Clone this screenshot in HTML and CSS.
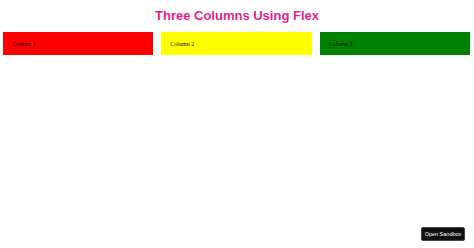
FILE: index.html
```html
<!DOCTYPE html>
<html lang="en">
<head>
<meta charset="utf-8">
<title>Three Columns Using Flex</title>
<link rel="stylesheet" href="styles.css">
</head>
<body>
<h1 class="title">Three Columns Using Flex</h1>
<div class="row">
  <div class="col col-red">Column 1</div>
  <div class="col col-yellow">Column 2</div>
  <div class="col col-green">Column 3</div>
</div>
<a class="sandbox-btn" href="#">Open Sandbox</a>
</body>
</html>
```

FILE: styles.css
```css
html, body {
  margin: 0;
  padding: 0;
  background: #ffffff;
}
body {
  width: 474px;
  height: 248px;
  position: relative;
  font-family: "Liberation Serif", "Times New Roman", serif;
}
.title {
  margin: 0;
  padding-top: 8px;
  height: 24px;
  font-family: "Liberation Sans", Arial, sans-serif;
  font-weight: bold;
  font-size: 13px;
  line-height: 16px;
  color: #e91e8c;
  text-align: center;
}
.row {
  display: flex;
  gap: 8px;
  padding: 0 4px 0 3px;
}
.col {
  flex: 1;
  height: 23px;
  box-sizing: border-box;
  padding-left: 9px;
  display: flex;
  align-items: center;
  font-size: 6px;
  color: #111;
}
.col-red { background: #ff0000; }
.col-yellow { background: #ffff00; }
.col-green { background: #008000; }
.sandbox-btn {
  position: absolute;
  left: 421px;
  top: 227px;
  width: 44px;
  height: 14px;
  box-sizing: border-box;
  background: #111;
  border: 1px solid #444;
  border-radius: 2px;
  color: #fff;
  font-family: "Liberation Sans", Arial, sans-serif;
  font-size: 5.5px;
  line-height: 12px;
  text-align: center;
  text-decoration: none;
}
```
